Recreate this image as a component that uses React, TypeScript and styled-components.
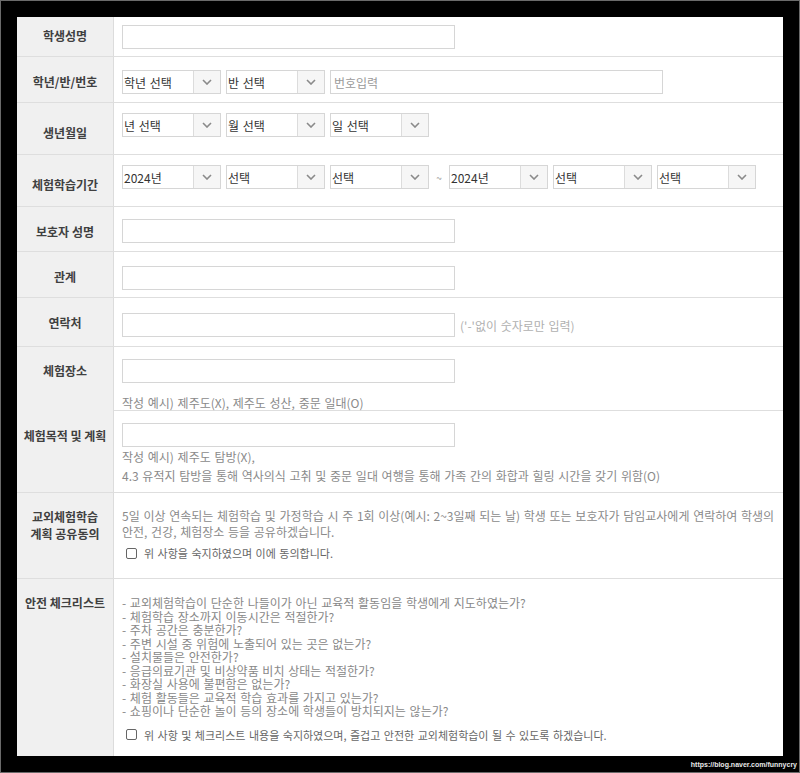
import React from "react";
import styled, { createGlobalStyle } from "styled-components";

const GlobalStyle = createGlobalStyle`
    html, body {
        margin: 0;
        padding: 0;
        background: #000;
    }
    * {
        box-sizing: border-box;
    }
`;

const FONT = `"Noto Sans CJK KR", "Noto Sans", sans-serif`;

const Page = styled.div`
    width: 800px;
    height: 773px;
    border: 1px solid #6a6a6a;
    background: #000;
    padding: 16px 16px 0 16px;
    display: flex;
    flex-direction: column;
    font-family: ${FONT};
`;

const Panel = styled.div`
    background: #fff;
    display: flex;
    flex-direction: column;
`;

const Row = styled.div<{ $h: number; $last?: boolean }>`
    display: grid;
    grid-template-columns: 97px 1fr;
    height: ${(p) => p.$h}px;
    border-bottom: ${(p) => (p.$last ? "none" : "1px solid #dedede")};
`;

const Label = styled.div<{ $pt: number }>`
    background: #f0f0f0;
    border-right: 1px solid #dcdcdc;
    padding-top: ${(p) => p.$pt}px;
    text-align: center;
    font-size: 12px;
    font-weight: 700;
    line-height: 17px;
    color: #404040;
    white-space: nowrap;
`;

const Cell = styled.div<{ $pt: number }>`
    padding: ${(p) => p.$pt}px 0 0 8px;
    font-size: 12px;
    word-spacing: 1px;
    color: #8a8a8a;
`;

const Line = styled.div`
    display: flex;
    align-items: center;
    gap: 5px;
`;

const TextInput = styled.div<{ $w?: number }>`
    width: ${(p) => p.$w ?? 333}px;
    height: 24px;
    border: 1px solid #d6d6d6;
    background: #fff;
    display: flex;
    align-items: center;
    padding-left: 3px;
    font-size: 12px;
    color: #9a9a9a;
`;

const SelectBox = styled.div`
    width: 99px;
    height: 24px;
    border: 1px solid #d6d6d6;
    display: flex;
    background: #fff;
`;

const SelectValue = styled.div`
    flex: 1;
    display: flex;
    align-items: center;
    padding-left: 1px;
    font-size: 12px;
    color: #333;
    white-space: nowrap;
`;

const ArrowBox = styled.div`
    width: 27px;
    background: #f6f6f6;
    border-left: 1px solid #dcdcdc;
    display: flex;
    align-items: center;
    justify-content: center;
`;

const Tilde = styled.span`
    width: 10px;
    text-align: center;
    font-size: 10px;
    color: #999;
`;

const Hint = styled.span`
    font-size: 12px;
    color: #b0b0b0;
    white-space: nowrap;
`;

const Note = styled.div<{ $lh: number; $mt?: number }>`
    line-height: ${(p) => p.$lh}px;
    margin-top: ${(p) => p.$mt ?? 0}px;
    white-space: nowrap;
`;

const CheckLine = styled.label<{ $mt: number }>`
    display: flex;
    align-items: center;
    height: 16px;
    margin-top: ${(p) => p.$mt}px;
    padding-left: 4px;
    gap: 7px;
    font-size: 11px;
    word-spacing: 1px;
    color: #666;
    white-space: nowrap;
`;

const Box = styled.span`
    flex: none;
    width: 11px;
    height: 11px;
    border: 1px solid #666;
    border-radius: 2px;
    background: #fff;
`;

const List = styled.ul`
    list-style: none;
    margin: 0;
    padding: 0;
    line-height: 13.5px;
    color: #888;
    white-space: nowrap;
`;

const Footer = styled.div`
    height: 16px;
    margin-right: -14px;
    display: flex;
    align-items: center;
    justify-content: flex-end;
    font-family: "Liberation Sans", sans-serif;
    font-size: 7px;
    font-weight: 700;
    color: #e8e8e8;
`;

function Chevron() {
    return (
        <svg width="10" height="6" viewBox="0 0 10 6">
            <path d="M1 1 L5 5 L9 1" fill="none" stroke="#8a8a8a" strokeWidth="1.6" />
        </svg>
    );
}

function Select({ value }: { value: string }) {
    return (
        <SelectBox>
            <SelectValue>{value}</SelectValue>
            <ArrowBox>
                <Chevron />
            </ArrowBox>
        </SelectBox>
    );
}

const checklist = [
    "교외체험학습이 단순한 나들이가 아닌 교육적 활동임을 학생에게 지도하였는가?",
    "체험학습 장소까지 이동시간은 적절한가?",
    "주차 공간은 충분한가?",
    "주변 시설 중 위험에 노출되어 있는 곳은 없는가?",
    "설치물들은 안전한가?",
    "응급의료기관 및 비상약품 비치 상태는 적절한가?",
    "화장실 사용에 불편함은 없는가?",
    "체험 활동들은 교육적 학습 효과를 가지고 있는가?",
    "쇼핑이나 단순한 놀이 등의 장소에 학생들이 방치되지는 않는가?",
];

export default function App() {
    return (
        <>
            <GlobalStyle />
            <Page>
                <Panel>
                    <Row $h={40}>
                        <Label $pt={10}>학생성명</Label>
                        <Cell $pt={8}>
                            <TextInput />
                        </Cell>
                    </Row>
                    <Row $h={46}>
                        <Label $pt={16}>학년/반/번호</Label>
                        <Cell $pt={13}>
                            <Line>
                                <Select value="학년 선택" />
                                <Select value="반 선택" />
                                <TextInput>번호입력</TextInput>
                            </Line>
                        </Cell>
                    </Row>
                    <Row $h={52}>
                        <Label $pt={21}>생년월일</Label>
                        <Cell $pt={10}>
                            <Line>
                                <Select value="년 선택" />
                                <Select value="월 선택" />
                                <Select value="일 선택" />
                            </Line>
                        </Cell>
                    </Row>
                    <Row $h={52}>
                        <Label $pt={21}>체험학습기간</Label>
                        <Cell $pt={10}>
                            <Line>
                                <Select value="2024년" />
                                <Select value="선택" />
                                <Select value="선택" />
                                <Tilde>~</Tilde>
                                <Select value="2024년" />
                                <Select value="선택" />
                                <Select value="선택" />
                            </Line>
                        </Cell>
                    </Row>
                    <Row $h={45}>
                        <Label $pt={16}>보호자 성명</Label>
                        <Cell $pt={12}>
                            <TextInput />
                        </Cell>
                    </Row>
                    <Row $h={46}>
                        <Label $pt={16}>관계</Label>
                        <Cell $pt={14}>
                            <TextInput />
                        </Cell>
                    </Row>
                    <Row $h={49}>
                        <Label $pt={16}>연락처</Label>
                        <Cell $pt={15}>
                            <Line>
                                <TextInput />
                                <Hint>('-'없이 숫자로만 입력)</Hint>
                            </Line>
                        </Cell>
                    </Row>
                    <Row $h={64}>
                        <Label $pt={15}>체험장소</Label>
                        <Cell $pt={12}>
                            <TextInput />
                            <Note $lh={16} $mt={12}>
                                작성 예시) 제주도(X), 제주도 성산, 중문 일대(O)
                            </Note>
                        </Cell>
                    </Row>
                    <Row $h={82}>
                        <Label $pt={16}>체험목적 및 계획</Label>
                        <Cell $pt={12}>
                            <TextInput />
                            <Note $lh={19}>작성 예시) 제주도 탐방(X),</Note>
                            <Note $lh={19}>
                                4.3 유적지 탐방을 통해 역사의식 고취 및 중문 일대 여행을 통해 가족 간의 화합과 힐링 시간을 갖기 위함(O)
                            </Note>
                        </Cell>
                    </Row>
                    <Row $h={86}>
                        <Label $pt={15}>
                            교외체험학습
                            <br />
                            계획 공유동의
                        </Label>
                        <Cell $pt={15}>
                            <Note $lh={16}>
                                5일 이상 연속되는 체험학습 및 가정학습 시 주 1회 이상(예시: 2~3일째 되는 날) 학생 또는 보호자가 담임교사에게 연락하여 학생의
                            </Note>
                            <Note $lh={16}>안전, 건강, 체험장소 등을 공유하겠습니다.</Note>
                            <CheckLine $mt={5}>
                                <Box />위 사항을 숙지하였으며 이에 동의합니다.
                            </CheckLine>
                        </Cell>
                    </Row>
                    <Row $h={177} $last>
                        <Label $pt={15}>안전 체크리스트</Label>
                        <Cell $pt={17}>
                            <List>
                                {checklist.map((item) => (
                                    <li key={item}>- {item}</li>
                                ))}
                            </List>
                            <CheckLine $mt={9}>
                                <Box />위 사항 및 체크리스트 내용을 숙지하였으며, 즐겁고 안전한 교외체험학습이 될 수 있도록 하겠습니다.
                            </CheckLine>
                        </Cell>
                    </Row>
                </Panel>
                <Footer>https://blog.naver.com/funnycry</Footer>
            </Page>
        </>
    );
}
